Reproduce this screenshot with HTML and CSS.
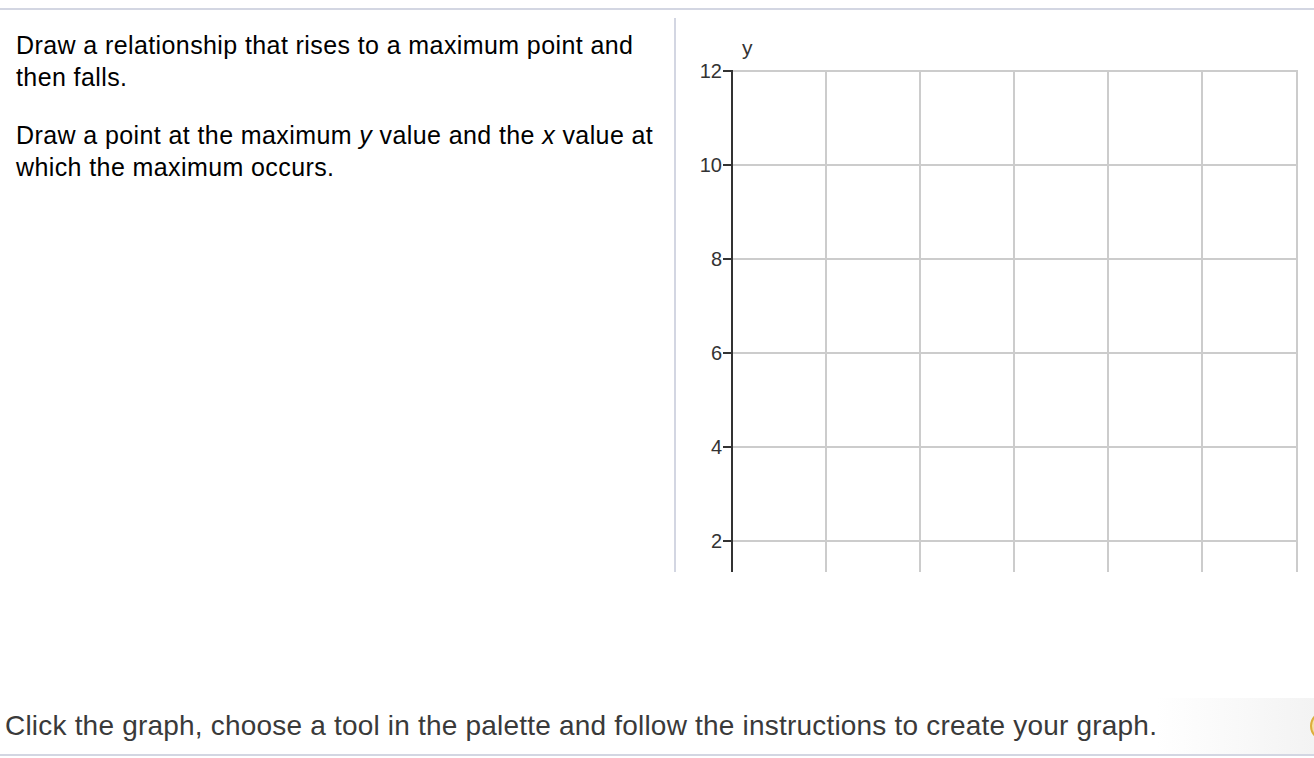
FILE: index.html
```html
<!DOCTYPE html>
<html>
<head>
<meta charset="utf-8">
<link rel="stylesheet" href="styles.css">
</head>
<body>
<div class="page">
  <div class="rule-top"></div>
  <div class="content">
    <div class="question">
      <p>Draw a relationship that rises to a maximum point and then falls.</p>
      <p>Draw a point at the maximum <i>y</i> value and the <i>x</i> value at which the maximum occurs.</p>
    </div>
    <div class="graph">
      <svg class="plot" width="638" height="554" viewBox="0 0 638 554" xmlns="http://www.w3.org/2000/svg">
        <g stroke="#cccccc" stroke-width="2" fill="none">
          <line x1="56" y1="53" x2="622" y2="53"/>
          <line x1="56" y1="147" x2="622" y2="147"/>
          <line x1="56" y1="241" x2="622" y2="241"/>
          <line x1="56" y1="335" x2="622" y2="335"/>
          <line x1="56" y1="429" x2="622" y2="429"/>
          <line x1="56" y1="523" x2="622" y2="523"/>
          <line x1="150" y1="53" x2="150" y2="554"/>
          <line x1="244" y1="53" x2="244" y2="554"/>
          <line x1="338" y1="53" x2="338" y2="554"/>
          <line x1="432" y1="53" x2="432" y2="554"/>
          <line x1="526" y1="53" x2="526" y2="554"/>
          <line x1="621" y1="53" x2="621" y2="554"/>
        </g>
        <g stroke="#333333" stroke-width="2" fill="none">
          <line x1="56" y1="52" x2="56" y2="554"/>
          <line x1="47" y1="53" x2="56" y2="53"/>
          <line x1="47" y1="147" x2="56" y2="147"/>
          <line x1="47" y1="241" x2="56" y2="241"/>
          <line x1="47" y1="335" x2="56" y2="335"/>
          <line x1="47" y1="429" x2="56" y2="429"/>
          <line x1="47" y1="523" x2="56" y2="523"/>
        </g>
        <g class="ticks" fill="#333333" text-anchor="end">
          <text x="46" y="60">12</text>
          <text x="46" y="154">10</text>
          <text x="46" y="248">8</text>
          <text x="46" y="342">6</text>
          <text x="46" y="436">4</text>
          <text x="46" y="530">2</text>
        </g>
        <text class="axis-label" x="66" y="37" fill="#333333">y</text>
      </svg>
    </div>
  </div>
  <div class="footer">
    <span class="hint">Click the graph, choose a tool in the palette and follow the instructions to create your graph.</span>
    <span class="help-badge"></span>
  </div>
</div>
</body>
</html>
```
FILE: styles.css
```css
html, body {
  margin: 0;
  padding: 0;
  background: #ffffff;
}

.page {
  width: 1314px;
  height: 758px;
  overflow: hidden;
  display: flex;
  flex-direction: column;
  padding-top: 8px;
  box-sizing: border-box;
  font-family: "Liberation Sans", Arial, sans-serif;
}

.rule-top {
  height: 2px;
  background: #d3d6e2;
  flex: none;
}

.content {
  display: flex;
  margin-top: 8px;
  height: 554px;
  flex: none;
}

.question {
  width: 676px;
  flex: none;
  box-sizing: border-box;
  padding: 11px 10px 0 16px;
  border-right: 2px solid #d3d6e2;
  color: #000000;
  font-size: 25px;
  letter-spacing: 0.4px;
  line-height: 32px;
}

.question p {
  margin: 0 0 26px 0;
}

.graph {
  flex: 1;
}

.plot {
  display: block;
}

.ticks {
  font-family: "Liberation Sans", Arial, sans-serif;
  font-size: 20px;
}

.axis-label {
  font-family: "Liberation Sans", Arial, sans-serif;
  font-size: 21px;
}

.footer {
  margin-top: auto;
  margin-bottom: 2px;
  height: 56px;
  display: flex;
  align-items: center;
  padding-left: 5px;
  border-bottom: 2px solid #d3d6e2;
  background: linear-gradient(to right, #ffffff 88%, #f3f3f3 100%);
}

.hint {
  font-size: 28px;
  letter-spacing: 0.2px;
  color: #3a3a3a;
  white-space: nowrap;
}

.help-badge {
  margin-left: auto;
  margin-right: -26px;
  width: 26px;
  height: 26px;
  border-radius: 50%;
  border: 2px solid #dcae3c;
  background: radial-gradient(circle at 40% 40%, #fbeec4, #f0cf78);
  flex: none;
}
```
